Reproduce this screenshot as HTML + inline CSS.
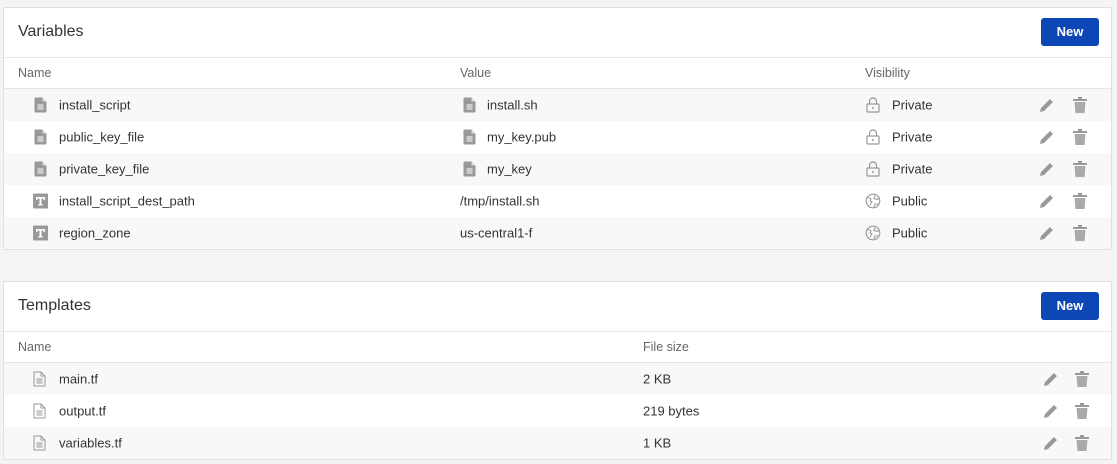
<!DOCTYPE html>
<html><head><meta charset="utf-8"><style>
*{box-sizing:border-box;margin:0;padding:0}
body{width:1117px;height:464px;background:#f4f4f4;font-family:"Liberation Sans",sans-serif;color:#333;font-size:13px;overflow:hidden;position:relative}
.card{position:absolute;left:3px;width:1109px;background:#fff;border:1px solid #e0e0e0;border-radius:2px}
.hd{height:50px;position:relative;border-bottom:1px solid #e6e6e6}
.hd h2{position:absolute;left:14px;top:15px;font-size:16px;font-weight:normal;color:#333}
.btn{position:absolute;right:12px;top:10px;width:58px;height:28px;background:#0d47b5;border-radius:3px;color:#fff;font-weight:bold;font-size:13px;text-align:center;line-height:28px}
.th{height:31px;position:relative;border-bottom:1px solid #e6e6e6;color:#666;font-size:12.5px}
.th span,.row span{position:absolute;top:50%;transform:translateY(-50%);white-space:nowrap}
.row{height:32px;position:relative}
.row:nth-child(odd){background:#f8f8f8}
.ic{position:absolute;top:50%;transform:translateY(-50%)}
</style></head><body>
<svg width="0" height="0" style="position:absolute">
<defs>
<symbol id="doc" viewBox="0 0 12 15"><path d="M0 1a1 1 0 0 1 1-1h7l4 4v10a1 1 0 0 1-1 1H1a1 1 0 0 1-1-1z" fill="#999"/><path d="M8 0v4h4" fill="#ddd"/><path d="M3 7.5h6M3 9.5h6M3 11.5h6" stroke="#fff" stroke-width="1"/></symbol>
<symbol id="doco" viewBox="0 0 13 16"><path d="M1 1h7l4 4v10H1z" fill="none" stroke="#999"/><path d="M8 1v4h4" fill="none" stroke="#999"/><path d="M3.5 8h6M3.5 10h6M3.5 12h6" stroke="#999"/></symbol>
<symbol id="t" viewBox="0 0 15 15"><rect width="15" height="15" rx="1" fill="#999"/><path d="M3 3.5h9v3h-1.5v-1.5h-2v6h1.5v1h-5v-1h1.5v-6h-2v1.5H3z" fill="#fff"/></symbol>
<symbol id="lock" viewBox="0 0 14 16"><path d="M3.5 7V4.5a3.5 3.5 0 0 1 7 0V7" fill="none" stroke="#999" stroke-width="1.2"/><rect x="1" y="7" width="12" height="8" rx="1" fill="none" stroke="#999" stroke-width="1.2"/><path d="M7 10v2" stroke="#999" stroke-width="1.5"/></symbol>
<symbol id="globe" viewBox="0 0 16 16"><circle cx="8" cy="8" r="6.8" fill="none" stroke="#999" stroke-width="1.2"/><path d="M3 4l3 2-1 2 2 1-2 3M10 2.5l-1 3 3 1 2-1M9 14l1-3 3 0" fill="none" stroke="#999" stroke-width="1"/></symbol>
<symbol id="pen" viewBox="0 0 16 16"><path d="M1 15l1-4 9-9 3 3-9 9z" fill="#999"/><path d="M11.5 1.5l3 3" stroke="#fff"/></symbol>
<symbol id="trash" viewBox="0 0 14 16"><rect x="0" y="2" width="14" height="2" fill="#999"/><rect x="5" y="0" width="4" height="2" fill="#999"/><path d="M1.5 5h11l-1 11h-9z" fill="#aaa"/></symbol>
</defs></svg>

<div class="card" style="top:7px;height:243px">
<div class="hd"><h2>Variables</h2><div class="btn">New</div></div>
<div class="th"><span style="left:14px">Name</span><span style="left:456px">Value</span><span style="left:861px">Visibility</span></div>
<div>
<div class="row"><svg class="ic" style="left:30px" width="13" height="15"><use href="#doc"/></svg><span style="left:55px">install_script</span><svg class="ic" style="left:459px" width="13" height="15"><use href="#doc"/></svg><span style="left:483px">install.sh</span><svg class="ic" style="left:862px" width="14" height="16"><use href="#lock"/></svg><span style="left:888px">Private</span><svg class="ic" style="left:1035px" width="16" height="16"><use href="#pen"/></svg><svg class="ic" style="left:1069px" width="14" height="16"><use href="#trash"/></svg></div>
<div class="row"><svg class="ic" style="left:30px" width="13" height="15"><use href="#doc"/></svg><span style="left:55px">public_key_file</span><svg class="ic" style="left:459px" width="13" height="15"><use href="#doc"/></svg><span style="left:483px">my_key.pub</span><svg class="ic" style="left:862px" width="14" height="16"><use href="#lock"/></svg><span style="left:888px">Private</span><svg class="ic" style="left:1035px" width="16" height="16"><use href="#pen"/></svg><svg class="ic" style="left:1069px" width="14" height="16"><use href="#trash"/></svg></div>
<div class="row"><svg class="ic" style="left:30px" width="13" height="15"><use href="#doc"/></svg><span style="left:55px">private_key_file</span><svg class="ic" style="left:459px" width="13" height="15"><use href="#doc"/></svg><span style="left:483px">my_key</span><svg class="ic" style="left:862px" width="14" height="16"><use href="#lock"/></svg><span style="left:888px">Private</span><svg class="ic" style="left:1035px" width="16" height="16"><use href="#pen"/></svg><svg class="ic" style="left:1069px" width="14" height="16"><use href="#trash"/></svg></div>
<div class="row"><svg class="ic" style="left:29px" width="15" height="15"><use href="#t"/></svg><span style="left:55px">install_script_dest_path</span><span style="left:456px">/tmp/install.sh</span><svg class="ic" style="left:861px" width="16" height="16"><use href="#globe"/></svg><span style="left:888px">Public</span><svg class="ic" style="left:1035px" width="16" height="16"><use href="#pen"/></svg><svg class="ic" style="left:1069px" width="14" height="16"><use href="#trash"/></svg></div>
<div class="row"><svg class="ic" style="left:29px" width="15" height="15"><use href="#t"/></svg><span style="left:55px">region_zone</span><span style="left:456px">us-central1-f</span><svg class="ic" style="left:861px" width="16" height="16"><use href="#globe"/></svg><span style="left:888px">Public</span><svg class="ic" style="left:1035px" width="16" height="16"><use href="#pen"/></svg><svg class="ic" style="left:1069px" width="14" height="16"><use href="#trash"/></svg></div>
</div></div>

<div class="card" style="top:281px;height:179px">
<div class="hd"><h2>Templates</h2><div class="btn">New</div></div>
<div class="th"><span style="left:14px">Name</span><span style="left:639px">File size</span></div>
<div>
<div class="row"><svg class="ic" style="left:29px" width="13" height="16"><use href="#doco"/></svg><span style="left:55px">main.tf</span><span style="left:639px">2 KB</span><svg class="ic" style="left:1039px" width="16" height="16"><use href="#pen"/></svg><svg class="ic" style="left:1071px" width="14" height="16"><use href="#trash"/></svg></div>
<div class="row"><svg class="ic" style="left:29px" width="13" height="16"><use href="#doco"/></svg><span style="left:55px">output.tf</span><span style="left:639px">219 bytes</span><svg class="ic" style="left:1039px" width="16" height="16"><use href="#pen"/></svg><svg class="ic" style="left:1071px" width="14" height="16"><use href="#trash"/></svg></div>
<div class="row"><svg class="ic" style="left:29px" width="13" height="16"><use href="#doco"/></svg><span style="left:55px">variables.tf</span><span style="left:639px">1 KB</span><svg class="ic" style="left:1039px" width="16" height="16"><use href="#pen"/></svg><svg class="ic" style="left:1071px" width="14" height="16"><use href="#trash"/></svg></div>
</div></div>
</body></html>
